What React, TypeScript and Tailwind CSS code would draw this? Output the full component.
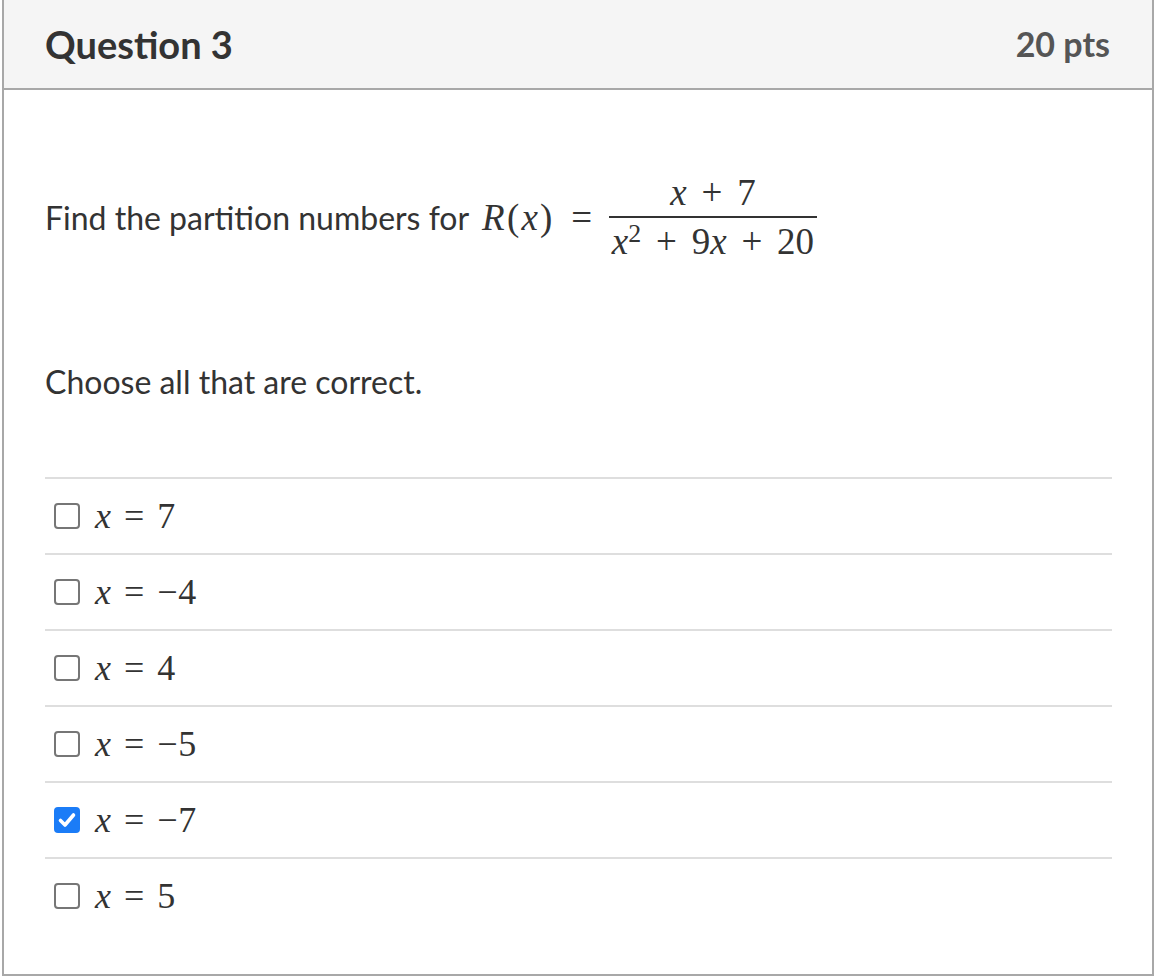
import React from 'react';

const serif = { fontFamily: '"Liberation Serif", "Times New Roman", serif' };

function V({ children }: { children: React.ReactNode }) {
  return (
    <span className="italic" style={{ fontStyle: 'italic' }}>
      {children}
    </span>
  );
}

function Rel({ children, wide }: { children: React.ReactNode; wide?: boolean }) {
  return <span className={wide ? 'mx-[0.45em]' : 'mx-[0.34em]'}>{children}</span>;
}

function Bin({ children }: { children: React.ReactNode }) {
  return <span className="mx-[0.4em]">{children}</span>;
}

function Checkbox({ checked }: { checked: boolean }) {
  if (checked) {
    return (
      <span className="flex h-[26px] w-[26px] items-center justify-center rounded-[4px] bg-[#1b7cf7]">
        <svg width="20" height="20" viewBox="0 0 20 20">
          <path d="M3.5 10.5 L8 15 L16.5 5" fill="none" stroke="white" strokeWidth="3.6" strokeLinecap="round" strokeLinejoin="round" />
        </svg>
      </span>
    );
  }
  return <span className="block h-[26px] w-[26px] rounded-[4px] border-2 border-[#767676] bg-white" />;
}

const answers = [
  { value: '7', neg: false, checked: false },
  { value: '4', neg: true, checked: false },
  { value: '4', neg: false, checked: false },
  { value: '5', neg: true, checked: false },
  { value: '7', neg: true, checked: true },
  { value: '5', neg: false, checked: false },
];

export default function App() {
  return (
    <div className="h-[978px] w-[1154px] overflow-hidden bg-white" style={{ fontFamily: 'Lato, "Open Sans", sans-serif' }}>
      <div className="ml-[2px] h-[976px] w-[1152px] border-x-2 border-b-2 border-[#a8a8a8] text-[#333]">
        <div className="flex h-[90px] items-center justify-between border-b-2 border-[#a8a8a8] bg-[#f5f5f5] pl-[41px] pr-[42px]">
          <h2 className="text-[38px] font-bold leading-none text-[#333]">Question 3</h2>
          <span className="text-[34px] font-bold leading-none text-[#555]">20 pts</span>
        </div>

        <div className="pl-[41px] pr-[40px]">
          <div className="mt-[80px] flex items-center text-[32px]">
            <span>Find the partition numbers for</span>
            <span className="ml-[0.35em] flex items-center text-[37px]" style={serif}>
              <span className="tracking-[0.06em]">
                <V>R</V>(<V>x</V>)
              </span>
              <Rel wide>=</Rel>
              <span className="inline-flex flex-col items-center">
                <span className="px-[3px] leading-[46px]">
                  <V>x</V>
                  <Bin>+</Bin>7
                </span>
                <span className="h-[2px] w-full bg-[#333]" />
                <span className="px-[3px] leading-[48px]">
                  <V>x</V>
                  <sup className="relative top-[-0.45em] text-[0.7em]">2</sup>
                  <Bin>+</Bin>9<V>x</V>
                  <Bin>+</Bin>20
                </span>
              </span>
            </span>
          </div>

          <p className="mt-[96px] text-[32px] leading-[40px]">Choose all that are correct.</p>

          <ul className="mt-[75px]">
            {answers.map((a, i) => (
              <li key={i} className="flex h-[76px] items-center border-t-2 border-[#dedede]">
                <span className="ml-[9px]">
                  <Checkbox checked={a.checked} />
                </span>
                <span className="ml-[15px] text-[36px] leading-none tracking-[0.02em]" style={serif}>
                  <V>x</V>
                  <Rel>=</Rel>
                  {a.neg ? '\u2212' : ''}
                  {a.value}
                </span>
              </li>
            ))}
          </ul>
        </div>
      </div>
    </div>
  );
}
